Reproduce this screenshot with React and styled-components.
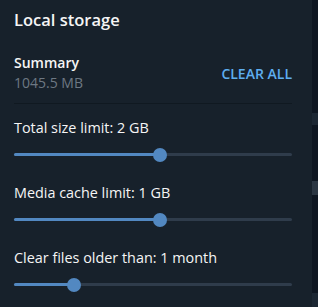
import styled, { createGlobalStyle } from 'styled-components'

const Global = createGlobalStyle`
    html, body { margin: 0; padding: 0; background: #0e1621; }
    body { font-family: "Open Sans", "DejaVu Sans", sans-serif; }
`;

const Page = styled.div`
    display: flex;
    width: 318px;
    height: 307px;
    overflow: hidden;
`;

const Panel = styled.div`
    width: 312px;
    background: #17212b;
    display: flex;
    flex-direction: column;
    padding: 0 20px 0 14px;
    box-sizing: border-box;
`;

const Title = styled.h1`
    margin: 9px 0 0;
    color: #f5f5f5;
    font-size: 16.5px;
    font-weight: 600;
    line-height: 22px;
`;

const SummaryRow = styled.div`
    display: flex;
    align-items: center;
    justify-content: space-between;
    margin-top: 22px;
    padding-bottom: 10px;
    border-bottom: 1px solid #101921;
`;

const SummaryName = styled.div`
    color: #f5f5f5;
    font-size: 14px;
    font-weight: 600;
    line-height: 20px;
`;

const SummarySize = styled.div`
    color: #6d7883;
    font-size: 14px;
    line-height: 20px;
`;

const ClearButton = styled.button`
    background: none;
    border: 0;
    padding: 0;
    color: #5eaef0;
    font-family: inherit;
    font-size: 14px;
    font-weight: 600;
    cursor: pointer;
`;

const Setting = styled.div`
    display: flex;
    flex-direction: column;
    margin-top: ${props => props.first ? 14 : 27}px;
`;

const Label = styled.div`
    color: #f5f5f5;
    font-size: 14.4px;
    line-height: 20px;
`;

const Track = styled.div`
    position: relative;
    margin-top: 15px;
    height: 3px;
    border-radius: 2px;
    background: #2f3c4b;
`;

const Fill = styled.div`
    height: 100%;
    border-radius: 2px;
    background: #5288c1;
`;

const Knob = styled.div`
    position: absolute;
    top: 50%;
    width: 14px;
    height: 14px;
    margin: -7px 0 0 -7px;
    border-radius: 50%;
    background: #5288c1;
`;

const Behind = styled.div`
    flex: 1;
    display: flex;
    flex-direction: column;
`;

const BehindBlock = styled.div`
    height: ${props => props.h}px;
    margin-top: ${props => props.top}px;
    background: ${props => props.color};
`;

function Slider({ value }) {
    return (
        <Track>
            <Fill style={{ width: value + '%' }} />
            <Knob style={{ left: value + '%' }} />
        </Track>
    );
}

const settings = [
    { label: 'Total size limit: 2 GB', value: 52.5 },
    { label: 'Media cache limit: 1 GB', value: 52.5 },
    { label: 'Clear files older than: 1 month', value: 21.5 },
];

export default function App() {
    return (
        <Page>
            <Global />
            <Panel>
                <Title>Local storage</Title>
                <SummaryRow>
                    <div>
                        <SummaryName>Summary</SummaryName>
                        <SummarySize>1045.5 MB</SummarySize>
                    </div>
                    <ClearButton>CLEAR ALL</ClearButton>
                </SummaryRow>
                {settings.map((s, i) => (
                    <Setting key={s.label} first={i === 0}>
                        <Label>{s.label}</Label>
                        <Slider value={s.value} />
                    </Setting>
                ))}
            </Panel>
            <Behind>
                <BehindBlock top={113} h={12} color="#1c2733" />
                <BehindBlock top={56} h={14} color="#2b3642" />
                <BehindBlock top={98} h={14} color="#1c2733" />
            </Behind>
        </Page>
    );
}
